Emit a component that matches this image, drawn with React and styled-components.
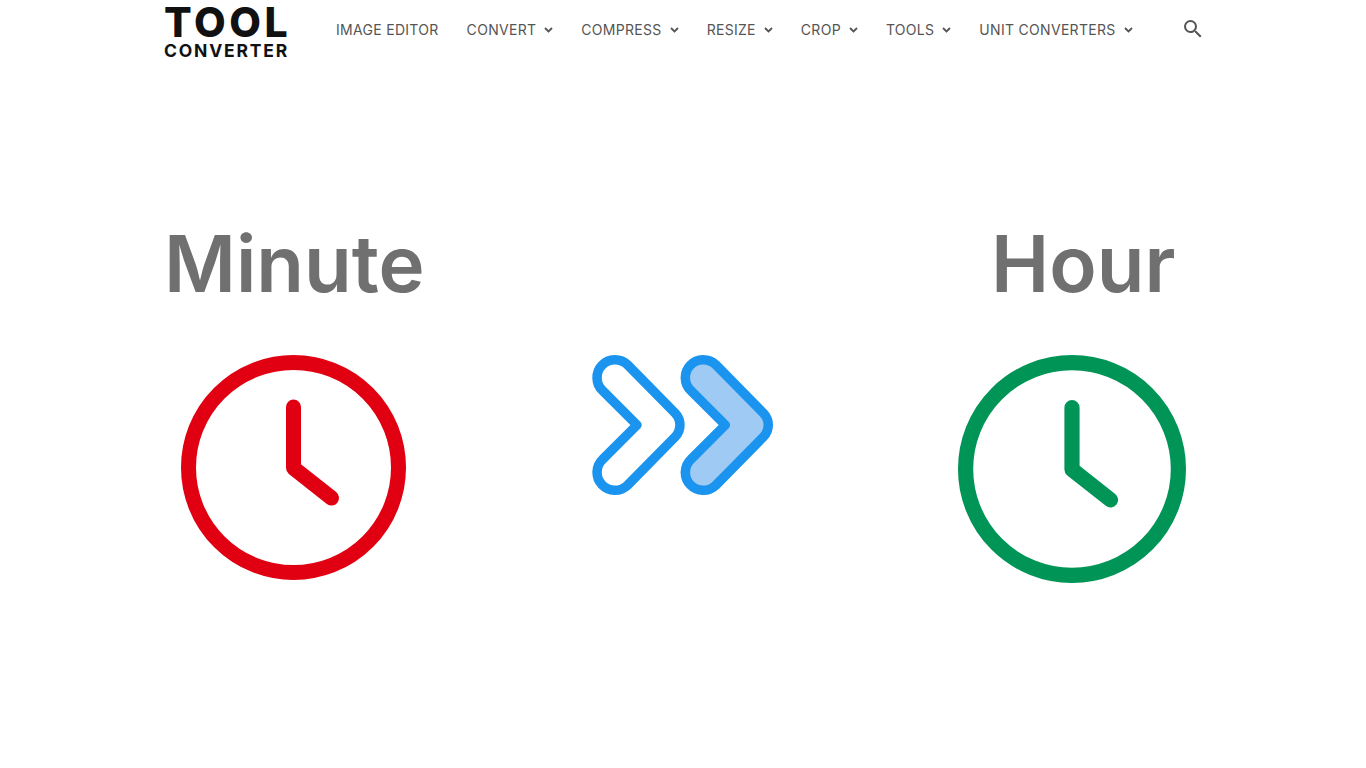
import React from "react";
import styled, { createGlobalStyle } from "styled-components";

const GlobalStyle = createGlobalStyle`
  html, body {
    margin: 0;
    padding: 0;
    background: #fff;
    font-family: Inter, "Liberation Sans", sans-serif;
  }
`;

const Page = styled.div`
  width: 1366px;
  height: 768px;
  overflow: hidden;
  background: #fff;
`;

const Header = styled.header`
  display: flex;
  align-items: flex-start;
  height: 60px;
  padding-left: 164px;
`;

const Logo = styled.a`
  display: flex;
  flex-direction: column;
  width: 124px;
  color: #111;
  font-weight: 800;
`;

const LogoTop = styled.span`
  font-size: 41px;
  line-height: 44px;
  letter-spacing: 3.6px;
  white-space: nowrap;
`;

const LogoBottom = styled.span`
  font-size: 17.5px;
  line-height: 14px;
  letter-spacing: 1.8px;
  font-weight: 700;
  white-space: nowrap;
`;

const Nav = styled.nav`
  display: flex;
  gap: 28px;
  margin: 21px 0 0 48px;
`;

const NavItem = styled.a`
  display: flex;
  align-items: center;
  gap: 8px;
  height: 18px;
  color: #555;
  font-size: 14px;
  line-height: 18px;
  letter-spacing: 0.3px;
  white-space: nowrap;
`;

const SearchButton = styled.button`
  display: flex;
  margin: 17px 0 0 48px;
  padding: 0;
  border: 0;
  background: none;
  color: #555;
`;

const Main = styled.main`
  display: grid;
  grid-template-columns: 260px 534px 244px;
  margin: 162px 0 0 164px;
`;

const Column = styled.section`
  display: flex;
  flex-direction: column;
`;

const Title = styled.h2`
  margin: 0 0 49px ${(p) => p.$indent || 0}px;
  color: #707070;
  font-size: 78px;
  font-weight: 600;
  line-height: 84px;
  white-space: nowrap;
`;

const ClockIcon = styled.svg`
  display: block;
  width: ${(p) => p.$size}px;
  height: ${(p) => p.$size}px;
  margin-left: ${(p) => p.$indent}px;
  fill: none;
  stroke: ${(p) => p.$color};
  stroke-width: 15;
  stroke-linecap: round;
  stroke-linejoin: round;
`;

const Arrows = styled.svg`
  display: block;
  width: 180px;
  height: 140px;
  margin: 133px 0 0 169px;
  overflow: visible;
  stroke: #1a94ee;
  stroke-width: 9.5;
  stroke-linejoin: round;
`;

const navLinks = [
  { label: "IMAGE EDITOR" },
  { label: "CONVERT", menu: true },
  { label: "COMPRESS", menu: true },
  { label: "RESIZE", menu: true },
  { label: "CROP", menu: true },
  { label: "TOOLS", menu: true },
  { label: "UNIT CONVERTERS", menu: true },
];

const Caret = () => (
  <svg width="9" height="6" viewBox="0 0 9 6" fill="none" stroke="#555" strokeWidth="1.8">
    <path d="M1 1l3.5 3.5L8 1" />
  </svg>
);

const Clock = ({ color, size, indent }) => (
  <ClockIcon viewBox="0 0 225 225" $color={color} $size={size} $indent={indent}>
    <circle cx="112.5" cy="112.5" r="105" />
    <path d="M112.5 52v61l38 30" />
  </ClockIcon>
);

const chevron =
  "M57 80L22.6 45.6A17.5 17.5 0 0 1 47.4 19.6L95 68A17 17 0 0 1 95 92L47.4 140.4A17.5 17.5 0 0 1 22.6 114.4Z";

export default function App() {
  return (
    <Page>
      <GlobalStyle />
      <Header>
        <Logo>
          <LogoTop>TOOL</LogoTop>
          <LogoBottom>CONVERTER</LogoBottom>
        </Logo>
        <Nav>
          {navLinks.map((link) => (
            <NavItem key={link.label}>
              {link.label}
              {link.menu && <Caret />}
            </NavItem>
          ))}
        </Nav>
        <SearchButton aria-label="Search">
          <svg width="24" height="24" viewBox="0 0 24 24" fill="currentColor">
            <path d="M15.5 14h-.79l-.28-.27A6.471 6.471 0 0 0 16 9.5 6.5 6.5 0 1 0 9.5 16c1.61 0 3.09-.59 4.23-1.57l.27.28v.79l5 4.99L20.49 19l-4.99-5zm-6 0C7.01 14 5 11.99 5 9.5S7.01 5 9.5 5 14 7.01 14 9.5 11.99 14 9.5 14z" />
          </svg>
        </SearchButton>
      </Header>
      <Main>
        <Column>
          <Title>Minute</Title>
          <Clock color="#e10012" size={225} indent={17} />
        </Column>
        <Column>
          <Arrows viewBox="13 10 180 140">
            <path d={chevron} fill="none" />
            <path d={chevron} fill="#9fcaf3" transform="translate(88.3 0)" />
          </Arrows>
        </Column>
        <Column>
          <Title $indent={33}>Hour</Title>
          <Clock color="#009456" size={228} indent={0} />
        </Column>
      </Main>
    </Page>
  );
}
